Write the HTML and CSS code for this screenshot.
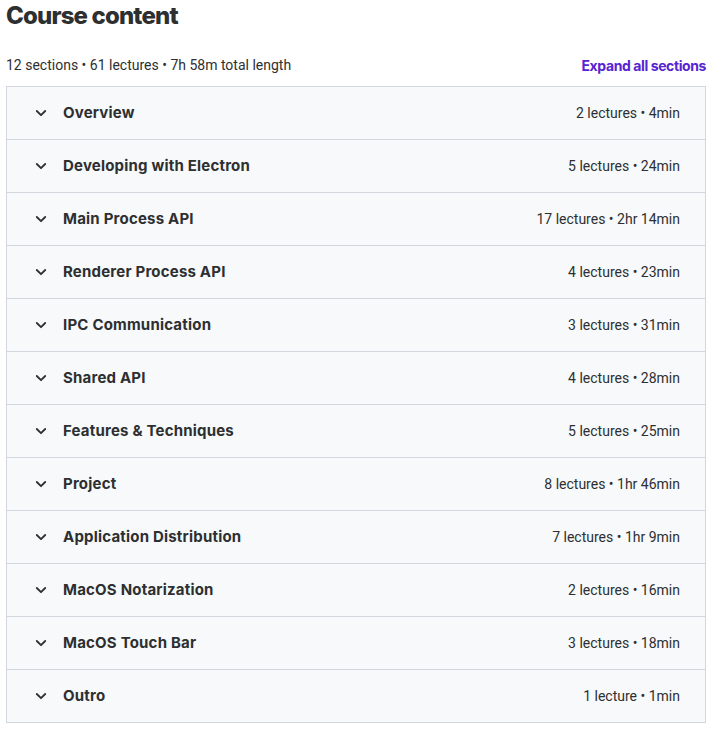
FILE: index.html
```html
<!DOCTYPE html>
<html>
<head>
<meta charset="utf-8">
<link rel="stylesheet" href="styles.css">
</head>
<body>
<div class="page">
  <h2 class="title">Course content</h2>
  <div class="meta-row">
    <span class="meta">12 sections • 61 lectures • 7h 58m total length</span>
    <button class="expand">Expand all sections</button>
  </div>
  <div class="sections">
    <div class="sec"><svg class="chev" viewBox="0 0 16 16"><path d="M3.8 6l4.2 4.2 4.2-4.2"/></svg><span class="name">Overview</span><span class="info">2 lectures • 4min</span></div>
    <div class="sec"><svg class="chev" viewBox="0 0 16 16"><path d="M3.8 6l4.2 4.2 4.2-4.2"/></svg><span class="name">Developing with Electron</span><span class="info">5 lectures • 24min</span></div>
    <div class="sec"><svg class="chev" viewBox="0 0 16 16"><path d="M3.8 6l4.2 4.2 4.2-4.2"/></svg><span class="name">Main Process API</span><span class="info">17 lectures • 2hr 14min</span></div>
    <div class="sec"><svg class="chev" viewBox="0 0 16 16"><path d="M3.8 6l4.2 4.2 4.2-4.2"/></svg><span class="name">Renderer Process API</span><span class="info">4 lectures • 23min</span></div>
    <div class="sec"><svg class="chev" viewBox="0 0 16 16"><path d="M3.8 6l4.2 4.2 4.2-4.2"/></svg><span class="name">IPC Communication</span><span class="info">3 lectures • 31min</span></div>
    <div class="sec"><svg class="chev" viewBox="0 0 16 16"><path d="M3.8 6l4.2 4.2 4.2-4.2"/></svg><span class="name">Shared API</span><span class="info">4 lectures • 28min</span></div>
    <div class="sec"><svg class="chev" viewBox="0 0 16 16"><path d="M3.8 6l4.2 4.2 4.2-4.2"/></svg><span class="name">Features &amp; Techniques</span><span class="info">5 lectures • 25min</span></div>
    <div class="sec"><svg class="chev" viewBox="0 0 16 16"><path d="M3.8 6l4.2 4.2 4.2-4.2"/></svg><span class="name">Project</span><span class="info">8 lectures • 1hr 46min</span></div>
    <div class="sec"><svg class="chev" viewBox="0 0 16 16"><path d="M3.8 6l4.2 4.2 4.2-4.2"/></svg><span class="name">Application Distribution</span><span class="info">7 lectures • 1hr 9min</span></div>
    <div class="sec"><svg class="chev" viewBox="0 0 16 16"><path d="M3.8 6l4.2 4.2 4.2-4.2"/></svg><span class="name">MacOS Notarization</span><span class="info">2 lectures • 16min</span></div>
    <div class="sec"><svg class="chev" viewBox="0 0 16 16"><path d="M3.8 6l4.2 4.2 4.2-4.2"/></svg><span class="name">MacOS Touch Bar</span><span class="info">3 lectures • 18min</span></div>
    <div class="sec"><svg class="chev" viewBox="0 0 16 16"><path d="M3.8 6l4.2 4.2 4.2-4.2"/></svg><span class="name">Outro</span><span class="info">1 lecture • 1min</span></div>
  </div>
</div>
</body>
</html>
```
FILE: styles.css
```css
html, body { margin: 0; padding: 0; background: #fff; }
body { font-family: Roboto, "Liberation Sans", sans-serif; color: #2d2f31; }
.page { padding: 0 6px; }
.title { margin: 0; padding-top: 2px; font-family: Inter, sans-serif; font-size: 24px; line-height: 28px; font-weight: 800; color: #2d2f31; letter-spacing: -0.85px; }
.meta-row { display: flex; justify-content: space-between; align-items: flex-start; margin-top: 25px; padding-bottom: 10px; }
.meta { font-size: 14px; line-height: 20px; color: #2d2f31; }
.expand { border: 0; background: none; padding: 0; margin-top: 1px; font-family: Inter, sans-serif; font-size: 14px; font-weight: 700; color: #5624d0; line-height: 20px; letter-spacing: -0.4px; }
.sections { border: 1px solid #d1d7dc; border-bottom: 0; }
.sec { display: flex; align-items: center; height: 52px; border-bottom: 1px solid #d1d7dc; background: #f7f9fa; padding: 0 25px 0 26px; }
.chev { width: 16px; height: 16px; fill: none; stroke: #2d2f31; stroke-width: 1.8; stroke-linecap: round; stroke-linejoin: round; margin-right: 14px; }
.name { font-family: Inter, sans-serif; font-size: 15px; font-weight: 700; letter-spacing: 0.2px; flex: 1; color: #2d2f31; margin-top: -1px; }
.info { font-size: 14px; color: #2d2f31; margin-top: -1px; }
```
